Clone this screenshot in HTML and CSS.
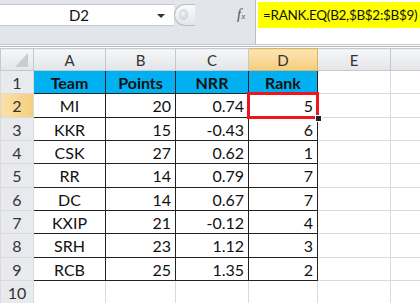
FILE: index.html
```html
<!DOCTYPE html>
<html lang="en">
<head>
    <meta charset="UTF-8">
    <title>RANK.EQ example</title>
    <link rel="stylesheet" href="styles.css">
</head>
<body>
    <!-- Name box and formula bar -->
    <div class="formula-bar">
        <div class="left-part">
            <div class="name-row">
                <div class="name-box">
                    <span class="name-text">D2</span>
                    <span class="drop-arrow"></span>
                </div>
                <div class="knob"><span class="knob-dot"></span></div>
                <div class="fx">f<sub>x</sub></div>
            </div>
        </div>
        <div class="formula-input">
            <span class="formula-text">=RANK.EQ(B2,$B$2:$B$9)</span>
        </div>
    </div>
    <div class="divider"></div>

    <!-- Sheet grid -->
    <table class="sheet">
        <colgroup>
            <col class="c-head">
            <col class="c-a">
            <col class="c-b">
            <col class="c-c">
            <col class="c-d">
            <col class="c-e">
            <col class="c-f">
        </colgroup>
        <tr class="col-heads">
            <th class="corner"><span class="corner-tri"></span></th>
            <th>A</th>
            <th>B</th>
            <th>C</th>
            <th class="active">D</th>
            <th>E</th>
            <th></th>
        </tr>
        <tr class="r23">
            <th class="row-head">1</th>
            <td class="data title">Team</td>
            <td class="data title">Points</td>
            <td class="data title">NRR</td>
            <td class="data title">Rank</td>
            <td></td><td></td>
        </tr>
        <tr class="r24">
            <th class="row-head active">2</th>
            <td class="data mid">MI</td>
            <td class="data num">20</td>
            <td class="data num">0.74</td>
            <td class="data num selected">5<span class="sel-box"></span><span class="handle"></span></td>
            <td></td><td></td>
        </tr>
        <tr class="r23">
            <th class="row-head">3</th>
            <td class="data mid">KKR</td>
            <td class="data num">15</td>
            <td class="data num">-0.43</td>
            <td class="data num">6</td>
            <td></td><td></td>
        </tr>
        <tr class="r23">
            <th class="row-head">4</th>
            <td class="data mid">CSK</td>
            <td class="data num">27</td>
            <td class="data num">0.62</td>
            <td class="data num">1</td>
            <td></td><td></td>
        </tr>
        <tr class="r24">
            <th class="row-head">5</th>
            <td class="data mid">RR</td>
            <td class="data num">14</td>
            <td class="data num">0.79</td>
            <td class="data num">7</td>
            <td></td><td></td>
        </tr>
        <tr class="r23">
            <th class="row-head">6</th>
            <td class="data mid">DC</td>
            <td class="data num">14</td>
            <td class="data num">0.67</td>
            <td class="data num">7</td>
            <td></td><td></td>
        </tr>
        <tr class="r23">
            <th class="row-head">7</th>
            <td class="data mid">KXIP</td>
            <td class="data num">21</td>
            <td class="data num">-0.12</td>
            <td class="data num">4</td>
            <td></td><td></td>
        </tr>
        <tr class="r24">
            <th class="row-head">8</th>
            <td class="data mid">SRH</td>
            <td class="data num">23</td>
            <td class="data num">1.12</td>
            <td class="data num">3</td>
            <td></td><td></td>
        </tr>
        <tr class="r23">
            <th class="row-head">9</th>
            <td class="data mid">RCB</td>
            <td class="data num">25</td>
            <td class="data num">1.35</td>
            <td class="data num">2</td>
            <td></td><td></td>
        </tr>
        <tr class="r23">
            <th class="row-head">10</th>
            <td></td><td></td><td></td><td></td><td></td><td></td>
        </tr>
    </table>
</body>
</html>
```

FILE: styles.css
```css
body {
    margin: 0;
    padding: 0;
    background-color: #fff;
    font-family: Lato, "Liberation Sans", sans-serif;
    color: #111;
    width: 420px;
    height: 303px;
    overflow: hidden;
}
.formula-bar {
    display: flex;
    height: 44px;
    background-color: #e2e5e9;
}
.left-part {
    width: 255px;
    flex: none;
}
.name-row {
    display: flex;
    align-items: center;
    height: 21px;
    margin-top: 4px;
}
.name-box {
    position: relative;
    width: 174px;
    height: 20px;
    background-color: #fff;
    border-top: 1px solid #c4c8ce;
    border-bottom: 1px solid #c4c8ce;
    display: flex;
    align-items: center;
    justify-content: center;
}
.name-text {
    font-size: 15px;
    margin-left: -16px;
}
.drop-arrow {
    position: absolute;
    right: 9px;
    top: 9px;
    width: 0;
    height: 0;
    border-left: 4px solid transparent;
    border-right: 4px solid transparent;
    border-top: 4px solid #333;
}
.knob {
    width: 16px;
    height: 20px;
    border: 1px solid #b9bec5;
    border-right: none;
    border-radius: 11px 0 0 11px;
    background: linear-gradient(#fbfbfc, #e3e6ea);
    display: flex;
    align-items: center;
    padding-left: 4px;
}
.knob-dot {
    width: 7px;
    height: 9px;
    border-radius: 50%;
    background: radial-gradient(circle at 40% 40%, #f4f5f7, #c9cdd3);
    border: 1px solid #d2d5da;
}
.fx {
    margin-left: 42px;
    font-family: "Liberation Serif", serif;
    font-style: italic;
    font-size: 15px;
    color: #555;
}
.fx sub {
    font-size: 9px;
    vertical-align: 0;
}
.formula-input {
    flex: 1;
    background-color: #fff;
    border-left: 1px solid #b9bec5;
    padding: 2px 0 0 2px;
}
.formula-text {
    display: inline-block;
    background-color: #ffff00;
    font-size: 13.5px;
    letter-spacing: -0.3px;
    line-height: 26px;
    padding: 0 5px 0 5px;
    color: #111;
}
.divider {
    height: 1px;
    border-top: 1px solid #c3c7cd;
    border-bottom: 1px solid #aeb4bc;
    background-color: #fff;
}
.sheet {
    border-collapse: collapse;
    table-layout: fixed;
    width: 420px;
    margin-top: 1px;
}
.c-head { width: 33px; }
.c-a { width: 72px; }
.c-b { width: 70px; }
.c-c { width: 73px; }
.c-d { width: 69px; }
.c-e { width: 73px; }
.c-f { width: 30px; }
.sheet td, .sheet th {
    border: 1px solid #d8dadc;
    padding: 0 4px;
    font-size: 16px;
    white-space: nowrap;
    overflow: visible;
}
.col-heads { height: 22px; }
.col-heads th {
    font-weight: normal;
    color: #333;
    font-size: 15px;
    background: linear-gradient(#f5f6f7, #e3e5e8);
    border-color: #c5c8cc;
}
.col-heads th.active {
    background: linear-gradient(#fbe5b3, #f6cd7c);
    border-color: #d8b56c;
}
.corner {
    position: relative;
}
.corner-tri {
    position: absolute;
    right: 5px;
    bottom: 3px;
    width: 0;
    height: 0;
    border-left: 13px solid transparent;
    border-bottom: 14px solid #c9ccd0;
}
.r23 { height: 23px; }
.r24 { height: 24px; }
.row-head {
    font-weight: normal;
    color: #333;
    font-size: 15px;
    background-color: #e8eaed;
    border-color: #c5c8cc;
}
.row-head.active {
    background: linear-gradient(90deg, #fbe2aa, #f6cd7c);
}
.sheet td.data {
    border: 1px solid #222;
}
.title {
    background-color: #00b0f0;
    font-weight: bold;
    text-align: center;
}
.mid {
    text-align: center;
}
.num {
    text-align: right;
}
.selected {
    position: relative;
}
.sel-box {
    position: absolute;
    left: -2px;
    top: -2px;
    right: -2px;
    bottom: -2px;
    border: 3px solid #f0141e;
}
.handle {
    position: absolute;
    right: -5px;
    bottom: -5px;
    width: 5px;
    height: 5px;
    background-color: #222;
    border: 1px solid #fff;
}
```
